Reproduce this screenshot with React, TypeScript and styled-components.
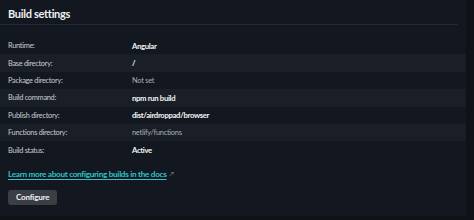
import React from "react";
import styled, { createGlobalStyle } from "styled-components";

const Global = createGlobalStyle`
  html, body { margin: 0; padding: 0; background: #131820; }
  body { font-family: Lato, "Open Sans", sans-serif; -webkit-font-smoothing: antialiased; }
`;

const Page = styled.div`
  width: 474px;
  height: 220px;
  background: #0f1318;
  display: flex;
  overflow: hidden;
`;

const Card = styled.section`
  width: 466px;
  height: 216px;
  background: #131820;
  box-sizing: border-box;
  display: flex;
  flex-direction: column;
`;

const Header = styled.header`
  height: 25px;
  box-sizing: border-box;
  padding: 5px 8px 0;
  border-bottom: 1px solid #232932;
  margin-right: 8px;
`;

const Title = styled.h2`
  margin: 0;
  font-size: 11px;
  letter-spacing: -0.3px;
  font-weight: 700;
  color: #eef0f2;
  line-height: 18px;
`;

const List = styled.dl`
  margin: 12px 0 0;
  display: flex;
  flex-direction: column;
`;

const Row = styled.div<{ $striped?: boolean }>`
  display: grid;
  grid-template-columns: 124px 1fr;
  height: 17.4px;
  align-items: center;
  padding-left: 8px;
  background: ${(p) => (p.$striped ? "#1a1f27" : "transparent")};
`;

const Label = styled.dt`
  font-size: 7.4px;
  letter-spacing: -0.28px;
  color: #c8ccd1;
`;

const Value = styled.dd<{ $muted?: boolean }>`
  margin: 0;
  font-size: ${(p) => (p.$muted ? "7.4px" : "7.7px")};
  letter-spacing: ${(p) => (p.$muted ? "-0.25px" : "-0.32px")};
  font-weight: ${(p) => (p.$muted ? 400 : 700)};
  color: ${(p) => (p.$muted ? "#a9aeb4" : "#f2f4f6")};
`;

const LinkLine = styled.div`
  margin: 9px 0 0 8px;
  display: flex;
  align-items: center;
  gap: 3px;
  height: 12px;
`;

const DocLink = styled.a`
  font-size: 8.2px;
  letter-spacing: -0.3px;
  font-weight: 700;
  color: #2fc3c8;
  text-decoration: underline;
  text-underline-offset: 1.5px;
`;

const Arrow = styled.span`
  font-size: 6px;
  color: #8a9096;
`;

const Button = styled.button`
  margin: 10px 0 0 8px;
  align-self: flex-start;
  height: 15px;
  padding: 0 8px;
  border: none;
  border-radius: 3px;
  background: #3a3f46;
  color: #eef0f2;
  font-family: inherit;
  font-size: 8px;
  letter-spacing: -0.2px;
  font-weight: 700;
`;

const rows: { label: string; value: string; muted?: boolean }[] = [
  { label: "Runtime:", value: "Angular" },
  { label: "Base directory:", value: "/" },
  { label: "Package directory:", value: "Not set", muted: true },
  { label: "Build command:", value: "npm run build" },
  { label: "Publish directory:", value: "dist/airdroppad/browser" },
  { label: "Functions directory:", value: "netlify/functions", muted: true },
  { label: "Build status:", value: "Active" },
];

export default function App() {
  return (
    <>
      <Global />
      <Page>
        <Card>
          <Header>
            <Title>Build settings</Title>
          </Header>
          <List>
            {rows.map((r, i) => (
              <Row key={r.label} $striped={i % 2 === 1}>
                <Label>{r.label}</Label>
                <Value $muted={r.muted}>{r.value}</Value>
              </Row>
            ))}
          </List>
          <LinkLine>
            <DocLink href="#">Learn more about configuring builds in the docs</DocLink>
            <Arrow>↗</Arrow>
          </LinkLine>
          <Button>Configure</Button>
        </Card>
      </Page>
    </>
  );
}
